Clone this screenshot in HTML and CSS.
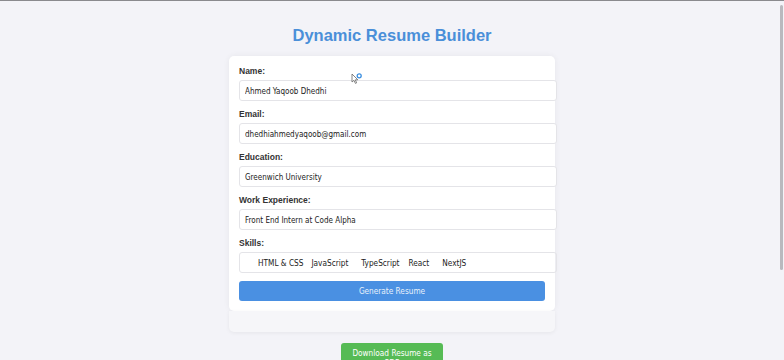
FILE: index.html
```html
<!DOCTYPE html>
<html lang="en">
<head>
    <meta charset="UTF-8">
    <meta name="viewport" content="width=device-width, initial-scale=1.0">
    <title>Dynamic Resume Builder</title>
    <link rel="stylesheet" href="styles.css">
</head>
<body>
    <div class="topline"></div>
    <h1>Dynamic Resume Builder</h1>
    <div class="wrapper">
        <form class="card">
            <label for="name">Name:</label>
            <input type="text" id="name" value="Ahmed Yaqoob Dhedhi">

            <label for="email">Email:</label>
            <input type="email" id="email" value="dhedhiahmedyaqoob@gmail.com">

            <label for="education">Education:</label>
            <input type="text" id="education" value="Greenwich University">

            <label for="experience">Work Experience:</label>
            <input type="text" id="experience" value="Front End Intern at Code Alpha">

            <label>Skills:</label>
            <div class="skills">
                <span class="skill s1">HTML &amp; CSS</span>
                <span class="skill s2">JavaScript</span>
                <span class="skill s3">TypeScript</span>
                <span class="skill s4">React</span>
                <span class="skill s5">NextJS</span>
            </div>

            <button type="button" class="btn-generate">Generate Resume</button>
        </form>
        <div class="output" id="resumeOutput"></div>
        <div class="download">
            <button type="button" class="btn-download">Download Resume as PDF</button>
        </div>
    </div>

    <!-- puntero del raton con el circulo de carga -->
    <svg class="cursor" width="12" height="12" viewBox="0 0 12 12">
        <path d="M1 1 L1 9 L3 7.3 L4.4 10.4 L5.6 9.9 L4.3 6.8 L6.8 6.8 Z" fill="#fff" stroke="#666" stroke-width="0.8"/>
        <circle cx="8.2" cy="2.8" r="2" fill="none" stroke="#3b8fe0" stroke-width="1.3"/>
    </svg>
    <div class="scrollbar"></div>
</body>
</html>
```

FILE: styles.css
```css
/* fondo general */
body {
    margin: 0;
    background: #f3f3f8;
    font-family: 'Liberation Sans', Arial, sans-serif;
    color: #333;
    overflow: hidden;
    height: 360px;
}

.topline {
    height: 1px;
    background: #8a8a8e;
}

h1 {
    margin: 25px 0 0;
    height: 19px;
    line-height: 19px;
    text-align: center;
    font-size: 16.5px;
    color: #4a8fd9;
}

.wrapper {
    width: 326px;
    margin: 11px auto 0;
}

.card {
    background: white;
    padding: 10px;
    border-radius: 5px;
    box-shadow: 0 0 6px rgba(0, 0, 0, 0.06);
    display: flex;
    flex-direction: column;
}

label {
    font-size: 8.5px;
    font-weight: bold;
    line-height: 10px;
    margin-bottom: 4px;
    color: #333;
}

input, .skills {
    height: 21px;
    box-sizing: border-box;
    padding: 1px 5px 0;
    margin: 0 0 8px;
    border: 1px solid #e4e4e8;
    border-radius: 3px;
    font-family: 'DejaVu Sans Condensed', 'DejaVu Sans', Tahoma, sans-serif;
    font-size: 8px;
    color: #222;
    width: calc(100% + 12px);
}

.skills {
    display: flex;
    align-items: center;
    padding-left: 18px;
    font-size: 8.2px;
}

.skill { margin-right: 8px; }
.s2 { margin-right: 13px; }
.s3 { margin-right: 9px; }
.s4 { margin-right: 13px; }

.btn-generate {
    height: 20px;
    background: #4a90e2;
    color: #e8f0fb;
    border: none;
    border-radius: 3px;
    font-family: 'DejaVu Sans Condensed', 'DejaVu Sans', Tahoma, sans-serif;
    font-size: 8.2px;
    cursor: pointer;
}

.output {
    height: 21px;
    background: #f6f6f9;
    border-radius: 0 0 5px 5px;
    box-shadow: 0 1px 4px rgba(0, 0, 0, 0.06);
}

.download {
    text-align: center;
    margin-top: 11px;
}

.btn-download {
    width: 102px;
    padding: 5px 6px;
    background: #56bb55;
    color: white;
    border: none;
    border-radius: 3px;
    font-family: 'DejaVu Sans Condensed', 'DejaVu Sans', Tahoma, sans-serif;
    font-size: 8.2px;
    line-height: 10px;
    cursor: pointer;
}

.cursor {
    position: absolute;
    left: 351px;
    top: 73px;
}

.scrollbar {
    position: fixed;
    right: 1px;
    top: 5px;
    width: 3px;
    height: 265px;
    background: #b9b9be;
    border-radius: 2px;
}
```
